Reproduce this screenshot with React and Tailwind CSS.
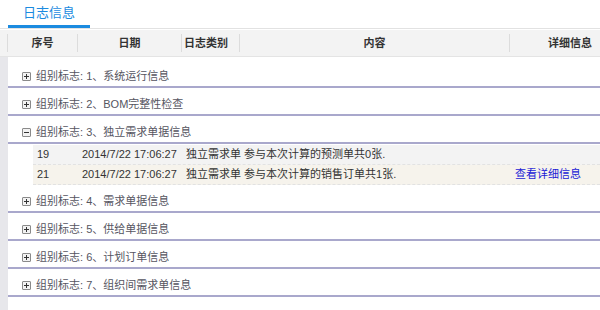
const GROUPS_TOP = [
  { id: 1, name: '系统运行信息' },
  { id: 2, name: 'BOM完整性检查' },
];

const GROUPS_BOTTOM = [
  { id: 4, name: '需求单据信息' },
  { id: 5, name: '供给单据信息' },
  { id: 6, name: '计划订单信息' },
  { id: 7, name: '组织间需求单信息' },
];

const ROWS = [
  { no: '19', date: '2014/7/22 17:06:27', text: '独立需求单 参与本次计算的预测单共0张.', link: false, bg: 'bg-[#f3f3f3]' },
  { no: '21', date: '2014/7/22 17:06:27', text: '独立需求单 参与本次计算的销售订单共1张.', link: true, bg: 'bg-[#f6f3ec]' },
];

const Toggle = ({ open }) => (
  <span className="w-[9px] h-[9px] shrink-0 border border-[#8a8a8a] bg-[#f2f2f2] flex items-center justify-center rounded-[1px]">
    <svg width="7" height="7" viewBox="0 0 7 7">
      <rect x="1" y="3" width="5" height="1" fill="#333" />
      {!open && <rect x="3" y="1" width="1" height="5" fill="#333" />}
    </svg>
  </span>
);

const GroupRow = ({ g, open }) => (
  <div className="h-[28px] flex items-center gap-[5px] pl-[14px] pt-[7px] border-b-2 border-[#a9a8cc]">
    <Toggle open={open} />
    <span className="text-[#55555f]">组别标志: {g.id}、{g.name}</span>
  </div>
);

export default function App() {
  return (
    <div className="w-[600px] h-[310px] bg-white overflow-hidden text-[11px] font-['Liberation_Sans','Noto_Sans_CJK_SC',sans-serif]">
      {/* tab */}
      <div className="h-[29px] flex items-end px-[8px] border-b border-[#e2e2e2]">
        <div className="w-[82px] h-[29px] flex items-center justify-center pt-[2px] border-b-[3px] border-[#1b8be0] text-[13px] text-[#1b8be0]">
          日志信息
        </div>
      </div>

      {/* header */}
      <div className="h-[27px] mt-[1px] flex items-center bg-[#f3f3f3] font-bold text-[#333] border-b border-[#e4e4e4]">
        <div className="w-[8px] h-[18px] border-r border-[#dcdcdc]" />
        <div className="w-[70px] h-[18px] flex items-center justify-center border-r border-[#dcdcdc]">序号</div>
        <div className="w-[104px] h-[18px] flex items-center justify-center border-r border-[#dcdcdc]">日期</div>
        <div className="w-[58px] h-[18px] flex items-center pl-[2px] border-r border-[#dcdcdc]">日志类别</div>
        <div className="w-[270px] h-[18px] flex items-center justify-center border-r border-[#dcdcdc]">内容</div>
        <div className="flex-1 h-[18px] flex items-center justify-end pr-[8px]">详细信息</div>
      </div>

      {/* body */}
      <div className="flex">
        <div className="w-[8px] bg-[#e7e7eb] h-[260px]" />
        <div className="flex-1 pt-[3px]">
          {GROUPS_TOP.map((g) => (
            <GroupRow key={g.id} g={g} />
          ))}
          <GroupRow g={{ id: 3, name: '独立需求单据信息' }} open />
          <div className="pl-[25px] pt-[1px]">
            {ROWS.map((r) => (
              <div key={r.no} className={`h-[20px] flex items-center border-b border-dashed border-[#e2e2e2] text-[#333] ${r.bg}`}>
                <div className="w-[49px] shrink-0 pl-[4px]">{r.no}</div>
                <div className="w-[104px] shrink-0">{r.date}</div>
                <div className="w-[329px] shrink-0">{r.text}</div>
                <div className="flex-1 text-[#1a1ad6] whitespace-nowrap">{r.link ? '查看详细信息' : ''}</div>
              </div>
            ))}
          </div>
          {GROUPS_BOTTOM.map((g) => (
            <GroupRow key={g.id} g={g} />
          ))}
        </div>
      </div>
    </div>
  );
}
